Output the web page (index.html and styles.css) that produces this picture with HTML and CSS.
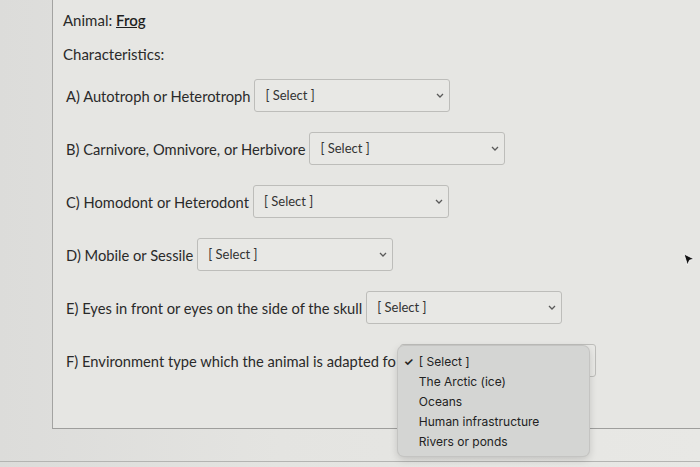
FILE: index.html
```html
<!DOCTYPE html>
<html lang="en">
<head>
    <meta charset="UTF-8">
    <meta name="viewport" content="width=device-width, initial-scale=1.0">
    <title>Animal characteristics</title>
    <link rel="stylesheet" href="styles.css">
</head>
<body>
    <div class="question">
        <p class="title">Animal: <span class="answer">Frog</span></p>
        <p class="title">Characteristics:</p>

        <div class="row">
            <span class="label">A) Autotroph or Heterotroph</span>
            <div class="select"><span>[ Select ]</span><svg class="chev" viewBox="0 0 8 5"><path d="M1 1 L4 4 L7 1"/></svg></div>
        </div>
        <div class="row">
            <span class="label">B) Carnivore, Omnivore, or Herbivore</span>
            <div class="select"><span>[ Select ]</span><svg class="chev" viewBox="0 0 8 5"><path d="M1 1 L4 4 L7 1"/></svg></div>
        </div>
        <div class="row">
            <span class="label">C) Homodont or Heterodont</span>
            <div class="select"><span>[ Select ]</span><svg class="chev" viewBox="0 0 8 5"><path d="M1 1 L4 4 L7 1"/></svg></div>
        </div>
        <div class="row">
            <span class="label">D) Mobile or Sessile</span>
            <div class="select"><span>[ Select ]</span><svg class="chev" viewBox="0 0 8 5"><path d="M1 1 L4 4 L7 1"/></svg></div>
        </div>
        <div class="row">
            <span class="label">E) Eyes in front or eyes on the side of the skull</span>
            <div class="select"><span>[ Select ]</span><svg class="chev" viewBox="0 0 8 5"><path d="M1 1 L4 4 L7 1"/></svg></div>
        </div>
        <div class="row">
            <span class="label">F) Environment type which the animal is adapted fo</span>
            <div class="select open">
                <svg class="chev" viewBox="0 0 8 5"><path d="M1 1 L4 4 L7 1"/></svg>
                <!-- native menu shown open -->
                <ul class="menu">
                    <li class="checked">[ Select ]</li>
                    <li>The Arctic (ice)</li>
                    <li>Oceans</li>
                    <li>Human infrastructure</li>
                    <li>Rivers or ponds</li>
                </ul>
            </div>
        </div>
    </div>
    <div class="bottom"></div>

    <svg class="cursor" viewBox="0 0 12 14"><path d="M1 1 L11 6 L6.5 7.2 L4.5 12 Z"/></svg>
</body>
</html>
```

FILE: styles.css
```css
html
{
    margin: 0;
    padding: 0;
}

body
{
    margin: 0;
    width: 700px;
    height: 467px;
    overflow: hidden;
    position: relative;
    background: linear-gradient(90deg, #dcdcda 0%, #e4e4e1 40%, #e8e8e5 100%);
    font-family: Lato, "Open Sans", sans-serif;
    color: #2a2a2a;
}

.question
{
    margin-left: 52px;
    height: 429px;
    box-sizing: border-box;
    border-left: 1px solid #a3a3a1;
    border-bottom: 1px solid #9e9e9c;
    padding: 10px 0 0 10px;
    background-color: #e6e6e3;
}

.title
{
    margin: 0 0 14px 0;
    font-size: 15px;
    line-height: 20px;
}

.answer
{
    text-decoration: underline;
    color: #1f1f1f;
    font-weight: 600;
}

.row
{
    display: flex;
    align-items: center;
    gap: 4px;
    margin: 0 0 20px 3px;
    height: 33px;
    position: relative;
    top: 1px;
}

.label
{
    font-size: 14.7px;
    white-space: nowrap;
}

.select
{
    position: relative;
    width: 196px;
    height: 33px;
    box-sizing: border-box;
    border: 1px solid #bdbdba;
    border-radius: 3px;
    background-color: #e8e8e5;
    display: flex;
    align-items: center;
    justify-content: space-between;
    padding: 0 5px 0 10px;
    font-size: 13px;
    color: #333;
}

.select span
{
    position: relative;
    top: -1px;
}

.select.open
{
    justify-content: flex-end;
}

.chev
{
    width: 8px;
    height: 5px;
    fill: none;
    stroke: #5a5a5a;
    stroke-width: 1.3;
}

.menu
{
    position: absolute;
    left: -3px;
    top: 1px;
    width: 191px;
    margin: 0;
    padding: 6px 0 4px 0;
    list-style: none;
    background-color: #d4d5d3;
    border-radius: 6px;
    box-shadow: 0 0 0 1px #c4c4c2, 0 3px 8px rgba(0, 0, 0, 0.18);
    font-family: Inter, "Noto Sans", sans-serif;
    font-size: 12px;
    color: #222;
}

.menu li
{
    height: 20px;
    line-height: 20px;
    padding-left: 21px;
    position: relative;
}

.menu li.checked::before
{
    content: "\2713";
    position: absolute;
    left: 6px;
    font-size: 11px;
    font-weight: 700;
}

.bottom
{
    margin-top: 32px;
    border-top: 1px solid #b4b4b2;
    height: 10px;
}

.cursor
{
    position: absolute;
    left: 683px;
    top: 253px;
    width: 12px;
    height: 14px;
    fill: #111;
    stroke: #fff;
    stroke-width: 0.8;
}
```
